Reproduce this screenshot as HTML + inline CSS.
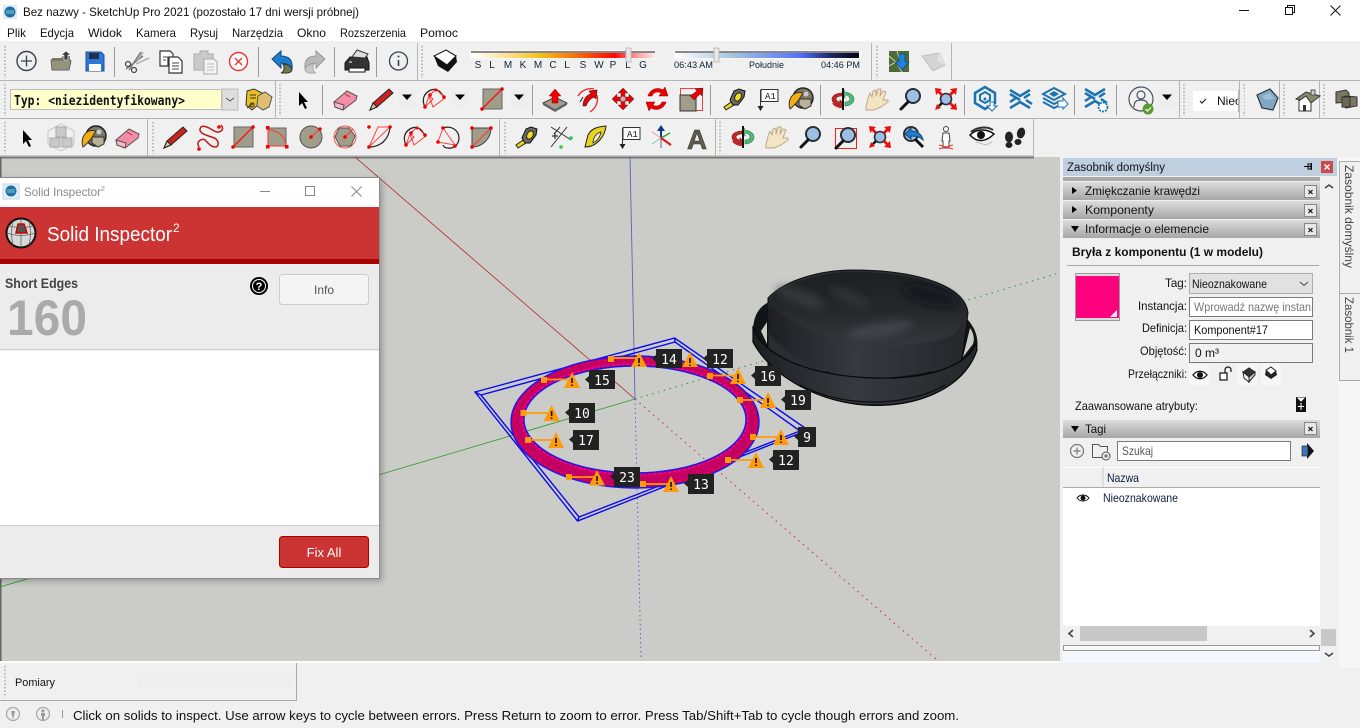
<!DOCTYPE html>
<html lang="pl"><head><meta charset="utf-8"><title>Bez nazwy - SketchUp Pro 2021</title>
<style>html,body{margin:0;padding:0;width:1360px;height:728px;overflow:hidden;background:#f0f0f0}svg{display:block}text{font-family:"Liberation Sans",sans-serif;fill:#111}.m{font-size:12px}.s{font-size:11px}.d{font-family:"DejaVu Sans Mono","Liberation Mono",monospace;font-size:13px;fill:#fff;text-anchor:middle}.l{font-size:10px;fill:#123;text-anchor:middle}</style></head><body>
<svg width="1360" height="728" viewBox="0 0 1360 728" xmlns="http://www.w3.org/2000/svg">
<defs>
<filter id="bl" x="-20%" y="-20%" width="140%" height="140%"><feGaussianBlur stdDeviation="3.500"/></filter>
<filter id="bl2f" x="-40%" y="-80%" width="180%" height="260%"><feGaussianBlur stdDeviation="4"/></filter>
<linearGradient id="hdr" x1="0" y1="0" x2="0" y2="1"><stop offset="0" stop-color="#dcdcdc"/><stop offset="1" stop-color="#a6a6a6"/></linearGradient>
<linearGradient id="g1"><stop offset="0" stop-color="#fff"/><stop offset=".12" stop-color="#fbeec4"/><stop offset=".38" stop-color="#f5c018"/><stop offset=".58" stop-color="#f96a08"/><stop offset=".78" stop-color="#ff0606"/><stop offset=".9" stop-color="#ff9a9a"/><stop offset="1" stop-color="#ffe8e8"/></linearGradient>
<linearGradient id="g2"><stop offset="0" stop-color="#fff"/><stop offset=".3" stop-color="#a8c6e0"/><stop offset=".68" stop-color="#5670ff"/><stop offset=".85" stop-color="#1d2460"/><stop offset="1" stop-color="#050510"/></linearGradient>
<linearGradient id="top" x1="0" y1="0" x2="0" y2="1"><stop offset="0" stop-color="#1d1f22"/><stop offset=".5" stop-color="#25282b"/><stop offset="1" stop-color="#34373b"/></linearGradient>
<linearGradient id="side" x1="0" y1="0" x2="1" y2="0"><stop offset="0" stop-color="#1d1f23"/><stop offset=".45" stop-color="#36393e"/><stop offset="1" stop-color="#25272b"/></linearGradient>
<g id="sel"><path d="M-4-8V6L-1 3 2 9 4 8 1 2H5Z" fill="#000"/></g>
<g id="eraser"><path d="M-11 3 2-8 12-3 11 1-2 11-10 8Z" fill="#f58ca8" stroke="#555"/><path d="M-11 3-10 8-2 11-1 6Z" fill="#f9b6c6" stroke="#555"/><path d="M0-5 5-2" stroke="#a33" fill="none"/></g>
<g id="pencil"><path d="M-11 11-8 4 8-10 12-6-4 8Z" fill="#cc2222" stroke="#222"/><path d="M-11 11-8 4-4 8Z" fill="#d8c8a0" stroke="#222"/></g>
<g id="drop"><path d="M-5-2.500H5L0 3Z" fill="#000"/></g>
<g id="rect"><rect x="-9" y="-10" width="19" height="20" fill="#a09e8a" stroke="#666"/><path d="M-10 10 10-10" stroke="#f11" stroke-width="1.300"/><circle cx="-10" cy="10" r="1.800" fill="#e00"/><circle cx="10" cy="-10" r="1.800" fill="#e00"/></g>
<g id="arc"><path d="M-8 8C-14-4-2-12 4-9 10-7 10 0 12-1" fill="none" stroke="#222" stroke-width="1.300"/><path d="M-8 8-4-3 0 0-8 8M-4-3 3-10 12-1 0 8Z" fill="none" stroke="#f33"/><circle cx="-8" cy="8" r="1.800" fill="#e00"/><circle cx="11" cy="-2" r="1.800" fill="#e00"/><circle cx="-3" cy="-4" r="1.800" fill="#e00"/><circle cx="3" cy="-9" r="1.500" fill="#e00"/></g>
<g id="tape"><path d="M-4 3-11 8-9 11-1 6Z" fill="#e8d020" stroke="#222"/><path d="M-5 1-1-8 4-10 10-8 9-2 3 6-2 6Z" fill="#6a6a62" stroke="#111"/><ellipse cx="3" cy="-2" rx="3" ry="4.500" fill="#f2e020" stroke="#222" transform="rotate(30 3-2)"/></g>
<g id="paint"><circle cx="3" cy="-1" r="10" fill="#7d7a68" stroke="#222" stroke-width="1.400"/><path d="M-1 0H11V7L5 10-1 6Z" fill="#b8b398" stroke="#333"/><path d="M-10 10C-13 2-8-9 3-6L-2 2C-5 5-7 8-10 10Z" fill="#f5ad10" stroke="#333"/><circle cx="6" cy="-5" r="2.500" fill="#ccc"/></g>
<g id="orbit"><path d="M-1-6C-7-6-11-3-11 0-11 3-8 6-3 7V9L1 5-3 1V3C-6 3-7 1-7 0-7-2-4-3-1-3Z" fill="#c02828" stroke="#711" stroke-width=".6"/><path d="M-10 4C-7 8-3 8-1 8" stroke="#c02828" stroke-width="2" fill="none"/><path d="M1-7C7-7 11-3 11 0 11 4 7 7 2 7V3C5 3 7 2 7 0 7-2 5-4 2-4V-1L-1-5 2-9Z" fill="#58b478" stroke="#285" stroke-width=".6"/><path d="M0-11V11" stroke="#111" stroke-width="2"/></g>
<g id="hand"><path d="M-11 11C-12 7-9 3-9-1L-7-6-5-2-4-8-1-9-1-3 1-10 4-10 3-3 6-8 9-7 6 1 11 1 11 3 4 8-3 11Z" fill="#f3e4c4" stroke="#b9a98a" stroke-linejoin="round"/></g>
<g id="zoom"><circle cx="2" cy="-3" r="7" fill="#9cc0e4" stroke="#2a2f35" stroke-width="2"/><path d="M-3 3-10 10" stroke="#111" stroke-width="3" stroke-linecap="round"/></g>
<g id="zext"><circle cx="0" cy="0" r="5.500" fill="#9cc0e4" stroke="#2a2f35" stroke-width="1.600"/><path d="M-4 4-7 7" stroke="#111" stroke-width="2.500"/><path d="M-11-11-4-10-6-8-3-5-5-3-8-6-10-4ZM11-11 4-10 6-8 3-5 5-3 8-6 10-4ZM11 11 4 10 6 8 3 5 5 3 8 6 10 4Z" fill="#e81010"/><path d="M-11 11-9 5-5 9Z" fill="#e81010"/></g>
<g id="bl1"><path d="M0-12 10-6V4L0 10-10 4V-6Z" fill="none" stroke="#1a74b0" stroke-width="2.500"/><path d="M0-7 5-4V1L0 4-5 1V-4Z" fill="none" stroke="#1a74b0" stroke-width="2"/><circle r="1.500" fill="#1a74b0"/><path d="M5 3H9V7H12L7 12 2 7H5Z" fill="#fff" stroke="#1a74b0"/></g>
<g id="bl2"><path d="M-11-9-1-3 9-9M-11-5-1 1" fill="none" stroke="#1a74b0" stroke-width="2.500"/><path d="M-11 9-1 3 9 9M9-5 3-1M-5-1-11 3M5 1 11 5" fill="none" stroke="#1a74b0" stroke-width="2.500"/></g>
<g id="bl3"><path d="M0-11 11-5 0 1-11-5Z" fill="none" stroke="#1a74b0" stroke-width="2"/><path d="M-5-5 0-8 5-5 0-2Z" fill="#1a74b0"/><path d="M-11-1 0 5 6 2M-11 3 0 9 4 7" fill="none" stroke="#1a74b0" stroke-width="2"/><path d="M4 2H9V-1L14 5 9 10V8H4Z" fill="#fff" stroke="#1a74b0"/></g>
</defs>

<rect width="1360" height="41" fill="#fff"/>
<rect y="41" width="1360" height="116" fill="#f0f0f0"/>
<path d="M3 5h14v14H3z" fill="#dfeaf5"/><circle cx="10" cy="12" r="5.500" fill="#1c6ea4"/><path d="M6 11h8M6 13h8" stroke="#8cc" />
<text x="23" y="16" class="m" textLength="336" lengthAdjust="spacingAndGlyphs">Bez nazwy - SketchUp Pro 2021 (pozostało 17 dni wersji próbnej)</text>
<path d="M1239 10.500h10" stroke="#111"/><path d="M1285.500 7.500h7v7h-7zM1287.500 7.500v-2h7v7h-2" fill="none" stroke="#111"/><path d="M1330.500 5.500l10 10M1340.500 5.500l-10 10" stroke="#111"/>
<g class="m"><text x="7" y="37" class="m" textLength="19" lengthAdjust="spacingAndGlyphs">Plik</text><text x="40" y="37" class="m" textLength="34" lengthAdjust="spacingAndGlyphs">Edycja</text><text x="88" y="37" class="m" textLength="34" lengthAdjust="spacingAndGlyphs">Widok</text><text x="136" y="37" class="m" textLength="40" lengthAdjust="spacingAndGlyphs">Kamera</text><text x="190" y="37" class="m" textLength="28" lengthAdjust="spacingAndGlyphs">Rysuj</text><text x="232" y="37" class="m" textLength="51" lengthAdjust="spacingAndGlyphs">Narzędzia</text><text x="297" y="37" class="m" textLength="29" lengthAdjust="spacingAndGlyphs">Okno</text><text x="340" y="37" class="m" textLength="66" lengthAdjust="spacingAndGlyphs">Rozszerzenia</text><text x="420" y="37" class="m" textLength="38" lengthAdjust="spacingAndGlyphs">Pomoc</text></g>

<path d="M0 80.500H1360M0 118.500H1360" stroke="#b4b4b4"/><path d="M0 156.500H1034" stroke="#a8a8a8" stroke-width="2"/>
<path d="M417.500 43V80M871.500 43V80M951.500 43V80M275.500 81V118M1179.500 81V118M1239.500 81V118M1279.500 81V118M1319.500 81V118M147.500 119V156M715.500 119V156M499.500 119V156M1033.500 119V156" stroke="#b4b4b4"/>
<path d="M114.500 47V77M258.500 47V77M334.500 47V77M376.500 47V77M322.500 85V115M532.500 85V115M710.500 85V115M820.500 85V115M964.500 85V115M1074.500 85V115M1116.500 85V115" stroke="#999"/>
<path d="M5 46V78M422 46V78M877 46V78M5 84V116M280 84V116M1184 84V116M1244 84V116M1284 84V116M1324 84V116M5 122V154M153 122V154M505 122V154M720 122V154" stroke="#bbb" stroke-width="2" stroke-dasharray="1.500 2"/>

<!-- row 1 -->
<circle cx="26.500" cy="61" r="9.500" fill="none" stroke="#3a4054" stroke-width="1.400"/><path d="M21 61h11M26.500 55.500v11" stroke="#3a4054" stroke-width="1.300"/>
<path d="M52 58h9l2-2h7v13H52Z" fill="#7d7b64"/><path d="M51 60h19l1 1-2 9H52Z" fill="#959379" stroke="#666"/><path d="M66 51l-5 4h3v5h4v-5h3Z" fill="#3a3a3a" stroke="#fff" stroke-width=".6"/>
<path d="M86 52h15l3 3v16H86Z" fill="#2c78d8" stroke="#1a4f96"/><rect x="89" y="53" width="10" height="6" fill="#20304a"/><rect x="89" y="64" width="12" height="7" fill="#fff"/>
<path d="M126 69 143 56M129 70 141 52" fill="none" stroke="#777" stroke-width="1.500"/><circle cx="128" cy="64" r="2.500" fill="none" stroke="#444" stroke-width="1.200"/><circle cx="134" cy="70" r="2.500" fill="none" stroke="#444" stroke-width="1.200"/><path d="M143 52 137 61M149 58 136 64" stroke="#aaa" stroke-width="1.500"/>
<path d="M160 51h10l3 3v4h-5v8h-8Z" fill="#fff" stroke="#333" stroke-width="1.200"/><path d="M169 57h9l4 4v12h-13Z" fill="#fff" stroke="#333" stroke-width="1.200"/><path d="M163 57h6M163 60h3M172 63h7M172 66h7M172 69h7" stroke="#444"/>
<path d="M194 54h6v-3h8v3h5v16h-19Z" fill="#c9c9c9" stroke="#aaa"/><path d="M204 59h10l3 3v12h-13Z" fill="#f4f4f4" stroke="#aaa"/><path d="M207 64h7M207 67h7M207 70h7" stroke="#bbb"/>
<circle cx="238.500" cy="61.500" r="9" fill="#fff" stroke="#e33" stroke-width="1.400"/><path d="M235 58l7 7M242 58l-7 7" stroke="#e33" stroke-width="1.400"/>
<path d="M272 59l9-8v5c8 0 12 4 11 13-2-4-5-6-11-6v5Z" fill="#1f7dd0" stroke="#134a7a"/><path d="M283 64c5 0 8 3 9 5 0 3-3 4-5 4h-6c3-1 4-5 2-9Z" fill="#6b7a50" stroke="#333"/>
<path d="M325 59l-9-8v5c-8 0-12 4-11 13 2-4 5-6 11-6v5Z" fill="#b8b8b8" stroke="#999"/><path d="M314 64c-5 0-8 3-9 5 0 3 3 4 5 4h6c-3-1-4-5-2-9Z" fill="#c8c8c8" stroke="#aaa"/>
<path d="M345 63l5-6h17l2 6v7h-24Z" fill="#333" stroke="#111"/><path d="M352 57l5-7 11 4-3 4Z" fill="#ddd" stroke="#333"/><path d="M349 68h16v4h-16z" fill="#fff" stroke="#111"/><path d="M349 62h3" stroke="#fff"/>
<circle cx="398.500" cy="61" r="9" fill="none" stroke="#3a4054" stroke-width="1.300"/><path d="M398.500 60v6" stroke="#3a4054" stroke-width="1.600"/><circle cx="398.500" cy="56.500" r="1" fill="#3a4054"/>
<path d="M434 56l12-6 10 6-9 9Z" fill="#fff" stroke="#222" stroke-width="1.200"/><path d="M434 56l13 9 9-9 1 6-9 10-10-6Z" fill="#111"/>
<rect x="470.500" y="50.500" width="185" height="8" fill="#fff"/><rect x="471" y="51" width="184" height="2" fill="#888"/><rect x="471" y="53" width="184" height="5" fill="url(#g1)"/>
<g><text class="l" x="478" y="68">S</text><text class="l" x="492" y="68">L</text><text class="l" x="508" y="68">M</text><text class="l" x="523" y="68">K</text><text class="l" x="538" y="68">M</text><text class="l" x="553" y="68">C</text><text class="l" x="567" y="68">L</text><text class="l" x="583" y="68">S</text><text class="l" x="599" y="68">W</text><text class="l" x="613" y="68">P</text><text class="l" x="628" y="68">L</text><text class="l" x="643" y="68">G</text></g>
<rect x="626" y="48" width="5" height="14" fill="#e8e8e8" stroke="#bbb"/>
<rect x="674.500" y="50.500" width="186" height="8" fill="#fff"/><rect x="675" y="51" width="184" height="2" fill="#888"/><rect x="675" y="53" width="184" height="5" fill="url(#g2)"/>
<rect x="714" y="48" width="5" height="14" fill="#e8e8e8" stroke="#bbb"/>
<text x="674" y="68" style="font-size:9.500px;fill:#123" textLength="39" lengthAdjust="spacingAndGlyphs">06:43 AM</text><text x="749" y="68" style="font-size:9.500px;fill:#123" textLength="35" lengthAdjust="spacingAndGlyphs">Południe</text><text x="821" y="68" style="font-size:9.500px;fill:#123" textLength="39" lengthAdjust="spacingAndGlyphs">04:46 PM</text>
<rect x="889" y="51" width="20" height="21" fill="#4d6b3a"/><path d="M889 56l7 6-7 4M897 51l3 10M902 72l-5-8" stroke="#d8d8a0" fill="none"/><path d="M899 54h6v8h4l-7 8-7-8h4Z" fill="#1c84e0" stroke="#103c70" stroke-width=".6"/>
<path d="M922 56l17-3 6 12-12 6Z" fill="#d4d4d4" stroke="#c0c0c0"/><path d="M939 53l6 12-8-4Z" fill="#e4e4e4"/>

<!-- row 2 -->
<rect x="10.500" y="89.500" width="211" height="20" fill="#ffffcc" stroke="#bdbdbd"/><rect x="222" y="89" width="16" height="21" fill="#dedede" stroke="#bbb"/><path d="M226 98l4 3 4-3" fill="none" stroke="#555"/>
<text x="14" y="105" style="font-family:'DejaVu Sans Mono','Liberation Mono',monospace;font-size:13px;font-weight:700;fill:#111" textLength="171" lengthAdjust="spacingAndGlyphs">Typ: &lt;niezidentyfikowany&gt;</text>
<path d="M247 91l7-2 8 4-4 12-6 5-6-5Z" fill="#e8c020" stroke="#333"/><path d="M258 96l7-4 7 5-3 10-6 3-6-4Z" fill="#e0c070" stroke="#555"/><path d="M250 95h6M250 98h6" stroke="#333"/><circle cx="252" cy="105" r="2" fill="none" stroke="#333"/><path d="M247 108l7-5" stroke="#333"/>
<use href="#sel" x="303" y="100"/><use href="#eraser" x="345" y="99"/><use href="#pencil" x="381" y="99"/><rect x="398" y="90" width="18" height="18" fill="#eee"/><use href="#drop" x="407" y="97"/><use href="#arc" x="433" y="99"/><rect x="451" y="90" width="18" height="18" fill="#eee"/><use href="#drop" x="460" y="97"/><use href="#rect" x="492" y="99"/><rect x="510" y="90" width="18" height="18" fill="#eee"/><use href="#drop" x="519" y="97"/>
<path d="M543 103l12-6 12 6-12 7Z" fill="#a09e8a" stroke="#444"/><path d="M543 103v2l12 7 12-7v-2l-12 7Z" fill="#666"/><path d="M555 89l6 7h-3v7h-6v-7h-3Z" fill="#e00" stroke="#900" stroke-width=".5"/>
<path d="M578 96c4-7 12-8 16-7M590 112c5-3 9-10 7-17" fill="none" stroke="#e22" stroke-width="1.300"/><path d="M583 106c0-6 3-11 8-12l-2-3 8-1-1 9-2-2c-4 2-6 4-8 9Z" fill="#e00" stroke="#222" stroke-width=".6"/><path d="M580 102l3-5" stroke="#222"/>
<path d="M623 88l5 5h-3v4h4v-3l5 5-5 5v-3h-4v4h3l-5 5-5-5h3v-4h-4v3l-5-5 5-5v3h4v-4h-3Z" fill="#e80000" stroke="#444" stroke-width=".5"/><circle cx="623" cy="99" r="2.500" fill="#bbb"/>
<path d="M648 96a10 10 0 0 1 15-6l2-3 3 9-9 0 2-3a6 6 0 0 0-9 3ZM666 102a10 10 0 0 1-15 6l-2 3-3-9 9 0 -2 3a6 6 0 0 0 9-3Z" fill="#e80000" stroke="#900" stroke-width=".5"/>
<rect x="680.500" y="88.500" width="22" height="22" fill="#fff" fill-opacity="0" stroke="#ee4444"/><rect x="680" y="95" width="16" height="16" fill="#a09e8a" stroke="#333"/><path d="M690 96l7-5-2-2 8-1-1 8-2-2-6 6Z" fill="#e00" stroke="#222" stroke-width=".5"/>
<use href="#tape" x="735" y="99"/>
<path d="M761 89.500h17v12h-17zM760.500 90v20" fill="#fff" stroke="#333"/><path d="M757.500 106h6l-3 5Z" fill="#222"/><text x="765" y="99" style="font-family:'Liberation Mono',monospace;font-size:9px;fill:#111">A1</text>
<use href="#paint" x="800" y="99"/><use href="#orbit" x="843" y="99"/><use href="#hand" x="877" y="99"/><use href="#zoom" x="911" y="99"/><use href="#zext" x="946" y="99"/>
<use href="#bl1" x="985" y="99"/><use href="#bl2" x="1021" y="99"/><use href="#bl3" x="1054" y="99"/><use href="#bl2" x="1096" y="98"/><circle cx="1103" cy="107" r="4.500" fill="#fff" stroke="#1a74b0" stroke-width="1.800" stroke-dasharray="2 1"/>
<circle cx="1141" cy="99" r="12" fill="none" stroke="#4d5060" stroke-width="1.200"/><circle cx="1141" cy="95" r="4" fill="none" stroke="#4d5060" stroke-width="1.200"/><path d="M1134 107c0-6 3-7 7-7s7 1 7 7" fill="none" stroke="#4d5060" stroke-width="1.200"/><circle cx="1148" cy="109" r="5.500" fill="#5a9a30"/><path d="M1145.500 109l2 2 3.500-3.500" stroke="#fff" fill="none" stroke-width="1.200"/>
<rect x="1158" y="90" width="18" height="18" fill="#eee"/><use href="#drop" x="1167" y="97"/>
<rect x="1193" y="91" width="45" height="20" fill="#fff"/><path d="M1200 101l2 2 4-4" fill="none" stroke="#222" stroke-width="1.200"/><text x="1217" y="105" class="m">Nieo</text><rect x="1238" y="90" width="1" height="22" fill="#b4b4b4"/><rect x="1239" y="90" width="5" height="22" fill="#f0f0f0"/><rect x="1239" y="81" width="1" height="37" fill="#b4b4b4"/>
<path d="M1257 95l13-6 8 9-5 12-11-2Z" fill="#7fa8c8" stroke="#333" stroke-width="1.200"/><path d="M1262 96l8-3 4 6-8 1Z" fill="#9fc0d8"/>
<path d="M1296 99l10-7 14 4-9 7ZM1299 100v9l12 2v-8Z" fill="#8a886f" stroke="#333"/><path d="M1299 101l7-5 5 7v8h-12Z" fill="#fff" stroke="#333"/><path d="M1303 105h3v6h-3z" fill="#333"/><path d="M1311 90h4v5h-4z" fill="#ccc" stroke="#555"/>
<path d="M1336 92l10-2 3 3v9l-13 1ZM1346 96l11 1v9l-11 2-3-2v-9Z" fill="#7a7863" stroke="#333"/><path d="M1342 97h8v10h-8z" fill="#6c6a56" stroke="#333"/>

<!-- row 3 -->
<use href="#sel" x="27" y="138"/>
<path d="M48 131l13-7 13 7v13l-13 7-13-7Z" fill="none" stroke="#ccc" stroke-width="1.200"/><path d="M56 127h10v10h-10zM50 138h10v9h-10zM62 138h10v9h-10z" fill="#c8c8c8" stroke="#aaa"/>
<use href="#paint" x="93" y="137"/><use href="#eraser" x="127" y="137"/><use href="#pencil" x="175" y="137"/>
<path d="M199 147c-4-6 4-9 6-7 3 3 6 7 10 7s4-5 1-8c-4-3-17-4-16-10 1-4 5-3 9-1s8 6 12 3c3-2 1-5 0-6" fill="none" stroke="#c01818" stroke-width="1.500"/><circle cx="199" cy="149" r="1.800" fill="#e00"/><circle cx="219" cy="127" r="1.800" fill="#e00"/>
<use href="#rect" x="243" y="137"/>
<rect x="268" y="128" width="18" height="18" fill="#a09e8a" stroke="#666"/><path d="M268 127v19h19M268 130c11 0 18 7 18 17" fill="none" stroke="#f33"/><rect x="266" y="126" width="3.500" height="3.500" fill="#e00"/><rect x="266" y="145" width="3.500" height="3.500" fill="#e00"/><rect x="285" y="145" width="3.500" height="3.500" fill="#e00"/>
<circle cx="311" cy="137" r="11" fill="#a09e8a" stroke="#555"/><path d="M311 137l9-8" stroke="#f33"/><circle cx="311" cy="137" r="1.800" fill="#e00"/><circle cx="320" cy="129" r="1.800" fill="#e00"/>
<circle cx="345" cy="137" r="11" fill="none" stroke="#f55"/><path d="M339 128h10l6 8-4 10h-11l-5-9Z" fill="#a09e8a" stroke="#555"/><path d="M345 137l8-8" stroke="#f33"/><circle cx="345" cy="137" r="1.800" fill="#e00"/>
<path d="M369 147c11 0 20-7 21-20" fill="none" stroke="#222" stroke-width="1.200"/><path d="M369 147 378 127H390M369 147 390 127" fill="none" stroke="#f44"/><circle cx="369" cy="147" r="1.800" fill="#e00"/><circle cx="390" cy="127" r="1.800" fill="#e00"/><circle cx="369" cy="127" r="1.800" fill="#e00"/>
<use href="#arc" x="414" y="137"/>
<path d="M443 128c9-3 16 3 16 10 0 6-5 11-11 10-3 0-4-1-5-3" fill="none" stroke="#222" stroke-width="1.200"/><path d="M443 128l12 17-17-3Z" fill="none" stroke="#f44"/><circle cx="443" cy="128" r="1.800" fill="#e00"/><circle cx="455" cy="146" r="1.800" fill="#e00"/><circle cx="438" cy="142" r="1.800" fill="#e00"/>
<path d="M472 128h19c0 10-8 19-19 19Z" fill="#a09e8a" stroke="#444"/><path d="M472 147 491 128" stroke="#f33"/><circle cx="472" cy="147" r="1.800" fill="#e00"/><circle cx="491" cy="128" r="1.800" fill="#e00"/><circle cx="472" cy="128" r="1.800" fill="#e00"/>
<use href="#tape" x="527" y="137"/>
<path d="M551 127l20 13M551 147l16-20M560 127l-6 7" fill="none" stroke="#333"/><circle cx="571" cy="138" r="1.800" fill="#2ecc40"/><circle cx="561" cy="147" r="1.800" fill="#2ecc40"/><path d="M552 136h6M555 133v6" stroke="#111"/>
<path d="M585 147l3-12c3-6 8-8 18-9-1 10-9 21-21 21Z" fill="#e6d420" stroke="#222"/><path d="M593 143c0-6 4-10 8-11-1 5-4 9-8 11Z" fill="#f0f0f0" stroke="#222" stroke-width=".8"/>
<path d="M623 127.500h17v12h-17zM622.500 128v20" fill="#fff" stroke="#333"/><path d="M619.500 144h6l-3 5Z" fill="#222"/><text x="627" y="137" style="font-family:'Liberation Mono',monospace;font-size:9px;fill:#111">A1</text>
<path d="M661 138V129" stroke="#123a80" stroke-width="2"/><path d="M661 125l4 6h-8Z" fill="#123a80"/><path d="M661 138v10" stroke="#aab" stroke-width="2"/><path d="M661 138l9-5" stroke="#2a2" stroke-width="1.500"/><path d="M661 138l-9 6" stroke="#8c8"/><path d="M661 138l10 7" stroke="#d11" stroke-width="2"/><path d="M661 138l-9-6" stroke="#e99"/>
<text x="697" y="149" text-anchor="middle" style="font-size:28px;font-weight:700;fill:#5d5c4c;stroke:#333;stroke-width:.5">A</text>
<use href="#orbit" x="743" y="137"/><use href="#hand" x="777" y="137"/><use href="#zoom" x="811" y="137"/>
<rect x="835.500" y="128.500" width="21" height="20" fill="none" stroke="#ee2222"/><use href="#zoom" x="846" y="138"/><use href="#zext" x="880" y="137"/>
<circle cx="911" cy="134" r="7" fill="#9cc0e4" stroke="#2a2f35" stroke-width="2"/><path d="M915 139 923 147" stroke="#111" stroke-width="3"/><path d="M905 134l6-6v3c6 0 11 3 12 9-3-3-6-4-12-4v3Z" fill="#1f7dd0" stroke="#134a7a"/>
<circle cx="946" cy="129" r="2.500" fill="#fff" stroke="#444"/><path d="M943 133h6l1 8h-1v7h-6v-7h-1Z" fill="#fff" stroke="#444"/><path d="M939 149l14-4M953 149l-14-4" stroke="#e33"/>
<path d="M970 135c6-6 16-7 24-1-8 8-17 9-24 1Z" fill="#fff" stroke="#111" stroke-width="1.500"/><circle cx="981" cy="135" r="4" fill="#111"/><path d="M971 132c6-5 16-6 22-2" stroke="#333" stroke-width="2" fill="none"/><path d="M976 142l10 3 6-3" stroke="#bbb" fill="none"/>
<ellipse cx="1009" cy="137" rx="4" ry="5.500" fill="#222"/><ellipse cx="1009" cy="145" rx="3.500" ry="3" fill="#222"/><ellipse cx="1021" cy="133" rx="4" ry="5.500" fill="#222" transform="rotate(15 1021 133)"/><ellipse cx="1018" cy="142" rx="3.500" ry="3" fill="#222"/>

<!-- viewport -->
<rect y="157" width="1060" height="504" fill="#cbccc7"/>
<rect x="0" y="157" width="1034" height="1.500" fill="#777"/><rect x="0" y="157" width="1.500" height="504" fill="#666"/>
<path d="M635 399 355 157" stroke="#b02828" stroke-width=".8" fill="none"/><path d="M635 399 937 660" stroke="#b33" stroke-dasharray="1.500 4.500" fill="none"/>
<path d="M635 399 0 587" stroke="#32a032" stroke-width=".9" fill="none"/><path d="M635 399 1059 273" stroke="#2a9a2a" stroke-dasharray="1.500 4.500" fill="none"/>
<path d="M630 157 635 399" stroke="#6060c8" stroke-width=".9" fill="none"/><path d="M635 399 641 660" stroke="#6060d8" stroke-dasharray="1.500 3" fill="none"/>

<g fill="none" stroke="#0a0af0" stroke-width="1.400"><path d="M475 392 674.600 338 808 430 577.600 521Z"/><path d="M481 395 675 342 800 431 579 517Z"/><path d="M475 392 481 395M674.600 338 675 342M808 430 800 431M577.600 521 579 517"/></g>
<path fill-rule="evenodd" d="M511 422a124 66 0 1 0 248 0a124 66 0 1 0-248 0ZM524 419.500a111 53.500 0 1 0 222 0a111 53.500 0 1 0-222 0Z" fill="#c40064" stroke="#1a1aee" stroke-width="1.400"/>
<ellipse cx="635" cy="422" rx="121" ry="63.500" fill="none" stroke="#f01030" stroke-width="1" stroke-dasharray="3 3"/>
<ellipse cx="635" cy="419.500" rx="113" ry="55.500" fill="none" stroke="#ff0088" stroke-width="1.500" stroke-dasharray="3 2"/>

<!-- dark object -->
<path d="M767 303C755 310 752 322 753 342C770 375 820 405 873 406C925 407 965 385 977 350C979 338 975 328 968 320L960 300H780Z" fill="#131417"/>
<path d="M767 322 761 331 767 344ZM970 328 963 357 973 344C975 338 973 332 970 328Z" fill="#cbccc7"/>
<path d="M768 298C785 280 820 270 853 270C915 270 965 285 968 313L960 372H768Z" fill="#2a2d31" stroke="#0c0d0e"/>
<path d="M770 303C785 320 825 340 857 345V378C820 375 780 350 768 332ZM857 345C885 348 925 345 952 336L964 322 960 362C930 375 890 379 857 378Z" fill="url(#side)"/>
<path d="M769 300C785 283 820 272 853 272C915 272 963 287 967 313C965 322 958 331 950 336C925 345 885 348 857 345C825 340 785 320 769 304Z" fill="url(#top)"/>
<g filter="url(#bl2f)"><ellipse cx="880" cy="330" rx="34" ry="7" fill="#4a4d52" opacity=".7" transform="rotate(-10 880 330)"/><ellipse cx="800" cy="297" rx="26" ry="7" fill="#41444a" opacity=".6" transform="rotate(20 800 297)"/><ellipse cx="930" cy="296" rx="28" ry="9" fill="#131417" opacity=".7" transform="rotate(15 930 296)"/><ellipse cx="850" cy="297" rx="22" ry="5" fill="#3a3d42" opacity=".6" transform="rotate(25 850 297)"/></g>
<path d="M753 326C756 345 790 375 873 378C930 380 968 365 976 343L977 350C965 385 925 406 873 405C820 405 770 375 753 342Z" fill="url(#side)" stroke="#08080a" stroke-width="1.200"/>
<path d="M800 385C825 398 850 402 873 402C905 402 930 394 945 385" fill="none" stroke="#0b0b0c" stroke-width="1.200"/>

<!-- markers -->
<g id="mk" fill="#ff9a0a" stroke="none">
<path d="M611 358h28M544 379.500h28M710 375.500h28M740 400h28M523.500 413h28M528 440h28M753 437h28M728 460h28M569 477h28M643 484h28" stroke="#ff9a0a" stroke-width="1.700" fill="none"/>
<rect x="608" y="356" width="6" height="6"/><rect x="541" y="377" width="6" height="6"/><rect x="707" y="373" width="6" height="6"/><rect x="737" y="397" width="6" height="6"/><rect x="520.500" y="410" width="6" height="6"/><rect x="525" y="437" width="6" height="6"/><rect x="750" y="434" width="6" height="6"/><rect x="725" y="457" width="6" height="6"/><rect x="566" y="474" width="6" height="6"/><rect x="640" y="481" width="6" height="6"/>
<path d="M639 352l8 15h-16ZM690 352l8 15h-16ZM572 372l8 16h-16ZM738 368l8 16h-16ZM768 392l8 16h-16ZM551.600 405l8 16h-16ZM556 432l8 16h-16ZM781 429l8 16h-16ZM756 452l8 16h-16ZM597 470l8 15.500h-16ZM671 476l8 16h-16Z"/>
</g>
<path d="M639 358v5M639 364.500v1.500M690 358v5M690 364.500v1.500M572 378v5M572 384.500v1.500M738 374v5M738 380.500v1.500M768 398v5M768 404.500v1.500M551.600 411v5M551.600 417.500v1.500M556 438v5M556 444.500v1.500M781 435v5M781 441.500v1.500M756 458v5M756 464.500v1.500M597 476v5M597 482.500v1.500M671 482v5M671 488.500v1.500" stroke="#111" stroke-width="1.600"/>
<g fill="#222"><path d="M656 349h26v19h-26v-6l-4-3.500 4-3.500Z"/><path d="M707 349h26v19h-26v-6l-4-3.500 4-3.500Z"/><path d="M589 370h26v19h-26v-6l-4-3.500 4-3.500Z"/><path d="M755 366h26v20h-26v-7l-4-3.500 4-3.500Z"/><path d="M785 390h26v20h-26v-7l-4-3.500 4-3.500Z"/><path d="M569 403h26v20h-26v-7l-4-3.500 4-3.500Z"/><path d="M573 430h26v20h-26v-7l-4-3.500 4-3.500Z"/><path d="M798 427h18v20h-18v-7l-4-3.500 4-3.500Z"/><path d="M773 450h26v20h-26v-7l-4-3.500 4-3.500Z"/><path d="M614 467h26v20h-26v-7l-4-3.500 4-3.500Z"/><path d="M688 474h26v20h-26v-7l-4-3.500 4-3.500Z"/></g>
<text class="d" x="669" y="364">14</text><text class="d" x="720" y="364">12</text><text class="d" x="602" y="385">15</text><text class="d" x="768" y="381">16</text><text class="d" x="798" y="405">19</text><text class="d" x="582" y="418">10</text><text class="d" x="586" y="445">17</text><text class="d" x="807" y="442">9</text><text class="d" x="786" y="465">12</text><text class="d" x="627" y="482">23</text><text class="d" x="701" y="489">13</text>

<!-- dialog -->
<rect x="-6" y="180" width="388" height="401" fill="#000" opacity=".28" filter="url(#bl)"/>
<rect x="-3" y="177.500" width="382.500" height="401" fill="#fff" stroke="#8a8a8a"/>
<rect x="3" y="184" width="16" height="15" fill="#e4eef7" stroke="#c8d6e4"/><circle cx="11" cy="191" r="5.500" fill="#1c6ea4"/><path d="M7 190h8M7 192h8" stroke="#8cc"/>
<text x="24" y="196" style="font-size:12px;fill:#8a8a8a" textLength="77" lengthAdjust="spacingAndGlyphs">Solid Inspector</text><text x="101" y="191" style="font-size:7px;fill:#8a8a8a">2</text>
<path d="M260 191.500h10" stroke="#888"/><rect x="305.500" y="186.500" width="9" height="9" fill="none" stroke="#888"/><path d="M351.500 186.500l10 10M361.500 186.500l-10 10" stroke="#888"/>
<rect x="0" y="207" width="379" height="52" fill="#cc3333"/><rect x="0" y="259" width="379" height="5" fill="#a80000"/>
<circle cx="21" cy="233" r="14.500" fill="#d8d8d8" stroke="#111" stroke-width="2"/><path d="M7 233q14 5 28 0M8 226q13 3 26 0M21 219v28M13 221q-3 12 0 24M29 221q3 12 0 24" fill="none" stroke="#666" stroke-width=".8"/><path d="M18 224h6l3 9h-11Z" fill="#555" stroke="#c00" stroke-width="1.500"/>
<text x="47" y="241" style="font-size:20.500px;fill:#fff" textLength="125" lengthAdjust="spacingAndGlyphs">Solid Inspector</text><text x="173" y="232" style="font-size:12px;fill:#fff">2</text>
<rect x="0" y="264" width="379" height="85" fill="#ececec"/><rect x="0" y="349" width="379" height="1.300" fill="#cfcfcf"/>
<text x="5" y="288" style="font-size:14px;font-weight:700;fill:#444" textLength="73" lengthAdjust="spacingAndGlyphs">Short Edges</text>
<text x="7" y="335" style="font-size:50px;font-weight:700;fill:#aaa" textLength="80" lengthAdjust="spacingAndGlyphs">160</text>
<circle cx="259" cy="286" r="9" fill="#000"/><circle cx="259" cy="286" r="6.500" fill="none" stroke="#fff"/><text x="259" y="290" text-anchor="middle" style="font-size:11px;font-weight:700;fill:#fff">?</text>
<rect x="279.500" y="274.500" width="89" height="30" rx="3" fill="#f4f4f4" stroke="#ccc"/><text x="324" y="294" text-anchor="middle" style="font-size:12px;fill:#555">Info</text>
<rect x="0" y="525" width="379" height="1.300" fill="#cfcfcf"/><rect x="0" y="526" width="379" height="52" fill="#ececec"/>
<rect x="279.500" y="536.500" width="89" height="31" rx="3" fill="#cc3333" stroke="#aa0000"/><text x="324" y="557" text-anchor="middle" style="font-size:13px;fill:#fff">Fix All</text>

<!-- right panel -->
<rect x="1060" y="157" width="300" height="511" fill="#f0f0f0"/><rect x="1338" y="157" width="22" height="511" fill="#f6f6f6"/>
<rect x="1063" y="158" width="274" height="18" fill="#bfcfe0"/>
<text x="1067" y="171" textLength="98" lengthAdjust="spacingAndGlyphs" style="font-size:11.500px">Zasobnik domyślny</text>
<path d="M1305 166.500h6M1311.500 163v7M1308 164h3v5h-3zM1304 166.500h4" stroke="#000" fill="none"/><rect x="1321" y="161" width="12" height="12" fill="#c94a4a"/><path d="M1324.500 164.500l5 5M1329.500 164.500l-5 5" stroke="#fff" stroke-width="1.300"/>
<rect x="1063" y="177" width="257" height="4" fill="#aaa"/>
<rect x="1339.500" y="161.500" width="21" height="219" fill="#f0f0f0" stroke="#aaa"/><path d="M1339 293.500h21" stroke="#aaa"/>
<text transform="rotate(90 1345 165)" x="1345" y="165" style="font-size:12px;fill:#444" textLength="103" lengthAdjust="spacingAndGlyphs">Zasobnik domyślny</text><text transform="rotate(90 1345 297)" x="1345" y="297" style="font-size:12px;fill:#444" textLength="56" lengthAdjust="spacingAndGlyphs">Zasobnik 1</text>
<rect x="1063" y="182" width="257" height="18" fill="url(#hdr)"/><rect x="1063" y="201" width="257" height="18" fill="url(#hdr)"/><rect x="1063" y="220" width="257" height="18" fill="url(#hdr)"/><rect x="1063" y="420" width="257" height="18" fill="url(#hdr)"/>
<path d="M1072 187v7l5-3.500ZM1072 206v7l5-3.500Z" fill="#000"/><path d="M1071 226h8l-4 6ZM1071 426h8l-4 6Z" fill="#000"/>
<text x="1085" y="195" class="m" textLength="115" lengthAdjust="spacingAndGlyphs">Zmiękczanie krawędzi</text><text x="1085" y="214" class="m" textLength="69" lengthAdjust="spacingAndGlyphs">Komponenty</text><text x="1085" y="233" class="m" textLength="124" lengthAdjust="spacingAndGlyphs">Informacje o elemencie</text><text x="1085" y="433" class="m" textLength="21" lengthAdjust="spacingAndGlyphs">Tagi</text>
<g fill="#e8e8e8" stroke="#888"><rect x="1304.500" y="185.500" width="12" height="12"/><rect x="1304.500" y="204.500" width="12" height="12"/><rect x="1304.500" y="223.500" width="12" height="12"/><rect x="1304.500" y="422.500" width="12" height="12"/></g>
<path d="M1308.500 190l4 4M1312.500 190l-4 4M1308.500 209l4 4M1312.500 209l-4 4M1308.500 228l4 4M1312.500 228l-4 4M1308.500 427l4 4M1312.500 427l-4 4" stroke="#111" stroke-width="1.200"/>
<path d="M1325 188l4-3 4 3" fill="none" stroke="#444" stroke-width="1.500"/>
<text x="1072" y="256" style="font-size:12px;font-weight:700;fill:#111" textLength="191" lengthAdjust="spacingAndGlyphs">Bryła z komponentu (1 w modelu)</text>
<path d="M1067 265.500H1319" stroke="#aaa"/>
<rect x="1075.500" y="273.500" width="44" height="47" fill="#ff007f" stroke="#999" stroke-width="1"/><rect x="1076" y="274" width="43" height="2" fill="#ddd"/><rect x="1076" y="318" width="43" height="2" fill="#ddd"/><path d="M1117 317h-7l7-7Z" fill="#eee"/>
<g style="font-size:12px"><text x="1165" y="287" class="m" textLength="22" lengthAdjust="spacingAndGlyphs">Tag:</text><text x="1138" y="310" class="m" textLength="49" lengthAdjust="spacingAndGlyphs">Instancja:</text><text x="1142" y="332" class="m" textLength="45" lengthAdjust="spacingAndGlyphs">Definicja:</text><text x="1140" y="355" class="m" textLength="47" lengthAdjust="spacingAndGlyphs">Objętość:</text><text x="1128" y="378" class="m" textLength="59" lengthAdjust="spacingAndGlyphs">Przełączniki:</text></g>
<rect x="1189.500" y="273.500" width="123" height="20" fill="#e1e1e1" stroke="#adadad"/><text x="1192" y="288" class="m" textLength="75" lengthAdjust="spacingAndGlyphs">Nieoznakowane</text><path d="M1300 282l4 3.500 4-3.500" fill="none" stroke="#444"/>
<rect x="1189.500" y="297.500" width="123" height="19" fill="#fff" stroke="#7a7a7a"/><text x="1194" y="311" class="m" textLength="117" lengthAdjust="spacingAndGlyphs" style="fill:#777">Wprowadź nazwę instan</text>
<rect x="1189.500" y="320.500" width="123" height="19" fill="#fff" stroke="#7a7a7a"/><text x="1194" y="334" class="m" textLength="74" lengthAdjust="spacingAndGlyphs">Komponent#17</text>
<rect x="1189.500" y="343.500" width="123" height="19" fill="#f0f0f0" stroke="#7a7a7a"/><text x="1195" y="357" class="m">0 m³</text>
<path d="M1189 364h20v21h-20zM1237 364h20v21h-20zM1261 364h20v21h-20z" fill="#f6f6f6"/>
<path d="M1193 375c4-5 10-5 14 0-4 5-10 5-14 0Z" fill="#fff" stroke="#111" stroke-width="1.200"/><circle cx="1200" cy="375" r="3" fill="#111"/>
<rect x="1220" y="373" width="7" height="7" fill="#fff" stroke="#111" stroke-width="1.200"/><path d="M1225 373v-3c0-4 6-4 6 0v2" fill="none" stroke="#111" stroke-width="1.200"/>
<path d="M1243 372l6-4 6 4-6 5Z" fill="#333" stroke="#222"/><path d="M1243 372l6 5v5l-5-4Z" fill="#fff" stroke="#222"/><path d="M1249 377l6-5v3l-6 7Z" fill="#ccc" stroke="#222"/>
<path d="M1266 370l5-3 5 4-5 4Z" fill="#fff" stroke="#222"/><path d="M1266 370l5 5 5-4 1 4-6 4-6-4Z" fill="#222"/>
<text x="1075" y="410" class="m" textLength="123" lengthAdjust="spacingAndGlyphs">Zaawansowane atrybuty:</text>
<rect x="1296" y="397" width="10" height="15" fill="#111"/><path d="M1298 398h6l-3 3ZM1301 403v7M1298 406.500h6" stroke="#fff" fill="#fff"/>
<circle cx="1077" cy="451" r="6.500" fill="none" stroke="#777" stroke-width="1.200"/><path d="M1073.500 451h7M1077 447.500v7" stroke="#777" stroke-width="1.200"/>
<path d="M1092.500 457.500v-13h6l2 2h7v5" fill="none" stroke="#555"/><path d="M1092.500 457.500h10" stroke="#555"/><circle cx="1106" cy="456" r="4" fill="#f0f0f0" stroke="#555"/><path d="M1104 456h4M1106 454v4" stroke="#555"/>
<rect x="1117.500" y="441.500" width="173" height="19" fill="#fff" stroke="#7a7a7a"/><text x="1122" y="455" class="m" textLength="31" lengthAdjust="spacingAndGlyphs" style="fill:#555">Szukaj</text>
<path d="M1302 446h5v-3l7 8-7 8v-3h-5Z" fill="#111"/><rect x="1302" y="446" width="6" height="10" fill="#3b76b8" stroke="#111" stroke-width=".6"/>
<path d="M1063 467.500h257" stroke="#fff"/><path d="M1103 467v20" stroke="#ccc" stroke-width="1"/><text x="1107" y="482" class="m" textLength="32" lengthAdjust="spacingAndGlyphs" style="fill:#102040">Nazwa</text><path d="M1063 487.500h257" stroke="#aaa"/>
<rect x="1063" y="488" width="257" height="138" fill="#fff"/>
<path d="M1077 498c3-4 9-4 12 0-3 4-9 4-12 0Z" fill="#fff" stroke="#111"/><circle cx="1083" cy="498" r="2.500" fill="#111"/><text x="1103" y="502" class="m" textLength="75" lengthAdjust="spacingAndGlyphs" style="fill:#102040">Nieoznakowane</text>
<rect x="1080" y="626" width="127" height="15" fill="#c8c8c8"/><path d="M1073 630l-4 3.500 4 3.500M1310 630l4 3.500-4 3.500" fill="none" stroke="#444" stroke-width="1.600"/>
<rect x="1063.500" y="645.500" width="256" height="5" fill="#f8f8f8" stroke="#999"/><rect x="1063" y="651" width="257" height="12" fill="#f4f7fb"/>
<rect x="1321" y="629" width="15" height="17" fill="#c8c8c8"/><path d="M1325 653l4 3 4-3" fill="none" stroke="#444" stroke-width="1.500"/>

<!-- bottom -->
<rect y="661" width="1060" height="2" fill="#fff"/><rect y="663" width="1060" height="65" fill="#f0f0f0"/><rect x="1060" y="668" width="300" height="60" fill="#f0f0f0"/>
<path d="M296.500 663V700.500H0" fill="none" stroke="#aaa"/><rect x="138" y="674" width="154" height="15" fill="#eee"/>
<path d="M5 666V698" stroke="#bbb" stroke-width="2" stroke-dasharray="1.500 2"/>
<text x="15" y="686" style="font-size:11px;fill:#111" textLength="40" lengthAdjust="spacingAndGlyphs">Pomiary</text>
<circle cx="13" cy="714" r="6.500" fill="#eee" stroke="#aaa" stroke-width="1.300"/><path d="M11 711h4l-1 4-1 5-1-5Z" fill="#999"/>
<circle cx="43" cy="714" r="6.500" fill="#eee" stroke="#aaa" stroke-width="1.300"/><circle cx="43" cy="711" r="1.500" fill="#999"/><path d="M41 713h4v3h-1v4h-2v-4h-1Z" fill="#999"/>
<path d="M62.500 710v8" stroke="#999"/>
<text x="73" y="720" style="font-size:13px;fill:#111" textLength="886" lengthAdjust="spacingAndGlyphs">Click on solids to inspect. Use arrow keys to cycle between errors. Press Return to zoom to error. Press Tab/Shift+Tab to cycle though errors and zoom.</text>
</svg>
</body></html>
